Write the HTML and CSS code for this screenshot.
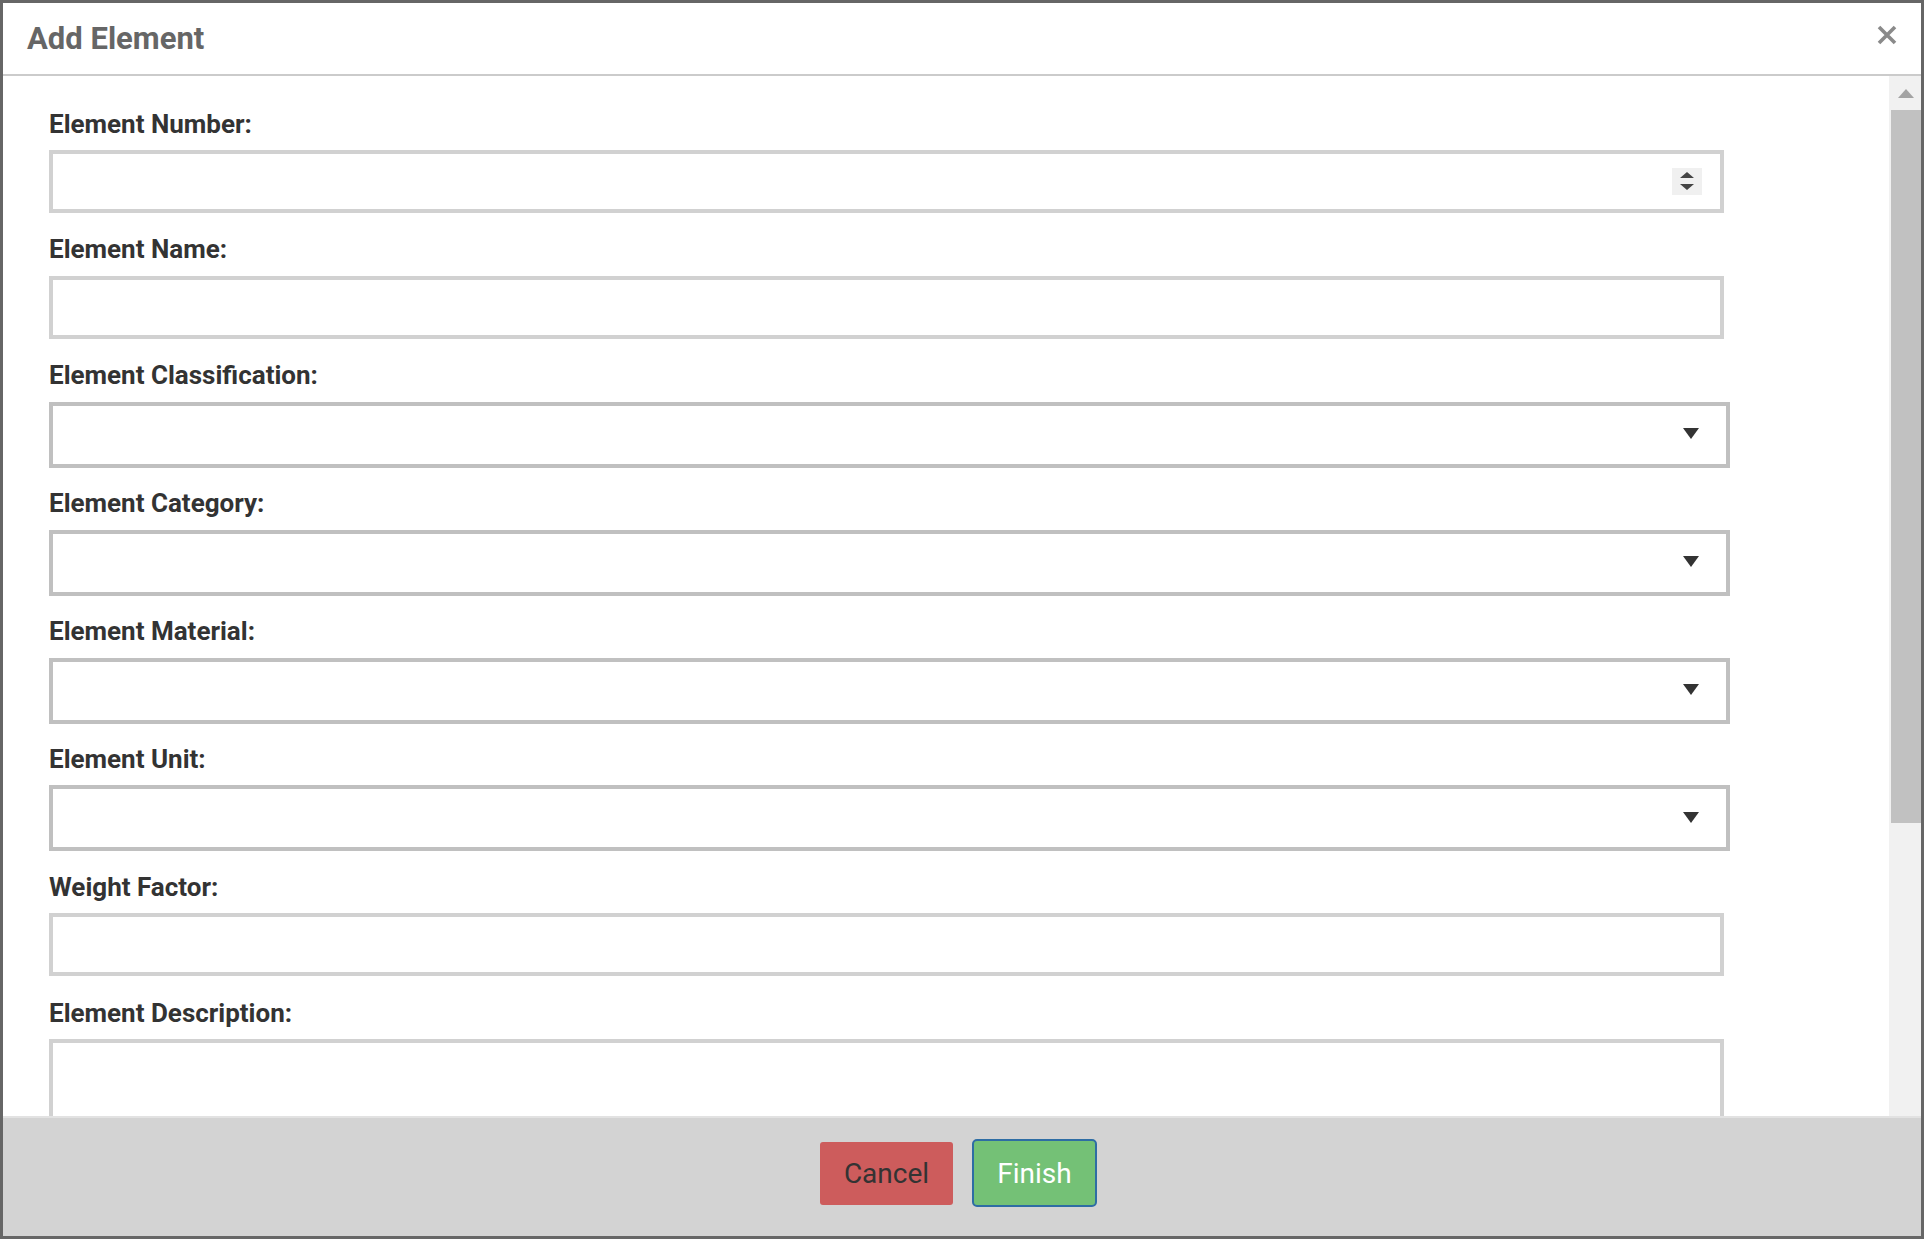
FILE: index.html
```html
<!DOCTYPE html>
<html lang="en">
<head>
<meta charset="utf-8">
<title>Add Element</title>
<link rel="stylesheet" href="styles.css">
</head>
<body>
<div class="modal">
  <div class="modal-header">
    <h4 class="modal-title">Add Element</h4>
    <button class="close" type="button" aria-label="Close">
      <svg width="20" height="20" viewBox="0 0 20 20"><path d="M2 2 L18 18 M18 2 L2 18" stroke="#8a8a8a" stroke-width="3.6" stroke-linecap="butt"/></svg>
    </button>
  </div>
  <div class="modal-body">
    <div class="form-area">
      <div class="form-group">
        <label class="label">Element Number:</label>
        <div class="field field-number">
          <div class="spinner">
            <svg width="30" height="27" viewBox="0 0 30 27"><path d="M8 10 L15 4 L22 10 Z M8 16 L22 16 L15 22 Z" fill="#444"/></svg>
          </div>
        </div>
      </div>
      <div class="form-group">
        <label class="label">Element Name:</label>
        <input class="field" type="text">
      </div>
      <div class="form-group sel">
        <label class="label">Element Classification:</label>
        <div class="select"><svg class="caret" width="16" height="11" viewBox="0 0 16 11"><path d="M0 0 L16 0 L8 11 Z" fill="#333"/></svg></div>
      </div>
      <div class="form-group sel">
        <label class="label">Element Category:</label>
        <div class="select"><svg class="caret" width="16" height="11" viewBox="0 0 16 11"><path d="M0 0 L16 0 L8 11 Z" fill="#333"/></svg></div>
      </div>
      <div class="form-group sel">
        <label class="label">Element Material:</label>
        <div class="select"><svg class="caret" width="16" height="11" viewBox="0 0 16 11"><path d="M0 0 L16 0 L8 11 Z" fill="#333"/></svg></div>
      </div>
      <div class="form-group sel">
        <label class="label">Element Unit:</label>
        <div class="select"><svg class="caret" width="16" height="11" viewBox="0 0 16 11"><path d="M0 0 L16 0 L8 11 Z" fill="#333"/></svg></div>
      </div>
      <div class="form-group">
        <label class="label">Weight Factor:</label>
        <input class="field" type="text">
      </div>
      <div class="form-group">
        <label class="label">Element Description:</label>
        <textarea class="field textarea"></textarea>
      </div>
    </div>
    <div class="scrollbar">
      <div class="sb-up"><svg width="16" height="9" viewBox="0 0 16 9"><path d="M0 9 L8 0 L16 9 Z" fill="#a3a3a3"/></svg></div>
      <div class="sb-thumb"></div>
    </div>
  </div>
  <div class="modal-footer">
    <button class="btn btn-cancel" type="button">Cancel</button>
    <button class="btn btn-finish" type="button">Finish</button>
  </div>
</div>
</body>
</html>
```
FILE: styles.css
```css
html, body {
  margin: 0;
  padding: 0;
  background: #ffffff;
}
body {
  font-family: Roboto, "Liberation Sans", Arial, sans-serif;
}
.modal {
  width: 1924px;
  height: 1239px;
  box-sizing: border-box;
  border: 3px solid #666666;
  display: flex;
  flex-direction: column;
  background: #ffffff;
  overflow: hidden;
}
.modal-header {
  height: 73px;
  box-sizing: border-box;
  border-bottom: 2px solid #cbcbcb;
  display: flex;
  align-items: center;
  justify-content: space-between;
  padding: 0 24px 0 24px;
  flex: none;
}
.modal-title {
  margin: 0;
  font-size: 31px;
  line-height: 37px;
  font-weight: 700;
  color: #666666;
}
.close {
  border: 0;
  background: transparent;
  padding: 0;
  margin: 0;
  width: 20px;
  height: 20px;
  display: block;
  align-self: flex-start;
  margin-top: 22px;
}
.close svg { display: block; }
.modal-body {
  flex: 1;
  display: flex;
  overflow: hidden;
  min-height: 0;
}
.form-area {
  flex: 1;
  padding: 33.5px 0 0 46px;
  overflow: hidden;
}
.form-group {
  margin-bottom: 22.5px;
}
.form-group.sel {
  margin-bottom: 21.5px;
}
.label {
  display: block;
  font-size: 26px;
  line-height: 29.4px;
  font-weight: 700;
  color: #333333;
  margin-bottom: 11px;
}
.field {
  display: block;
  width: 1675px;
  height: 63px;
  box-sizing: border-box;
  border: 4px solid #d1d1d1;
  background: #ffffff;
  margin: 0;
  padding: 0;
  outline: none;
  font-family: inherit;
  border-radius: 0;
}
.field-number {
  display: flex;
  align-items: center;
  justify-content: flex-end;
  padding-right: 18px;
}
.spinner {
  width: 30px;
  height: 27px;
  background: #f0f0f0;
}
.spinner svg { display: block; }
.textarea {
  height: 120px;
  resize: none;
}
.select {
  width: 1681px;
  height: 66px;
  box-sizing: border-box;
  border: 4px solid #c0c0c0;
  background: #ffffff;
  display: flex;
  align-items: center;
  justify-content: flex-end;
  padding-right: 27px;
}
.caret {
  display: block;
  position: relative;
  top: -1px;
}
.scrollbar {
  width: 32px;
  flex: none;
  background: #f1f1f1;
  display: flex;
  flex-direction: column;
}
.sb-up {
  height: 34px;
  display: flex;
  align-items: flex-start;
  justify-content: center;
  padding-top: 13px;
  box-sizing: border-box;
  padding-left: 2px;
}
.sb-up svg { display: block; }
.sb-thumb {
  margin-left: 2px;
  width: 30px;
  height: 713px;
  background: #c1c1c1;
}
.modal-footer {
  height: 120px;
  box-sizing: border-box;
  flex: none;
  background: #d3d3d3;
  border-top: 2px solid #e2e2e2;
  display: flex;
  align-items: center;
  justify-content: center;
  gap: 19px;
  padding: 0 7px 8px 0;
}
.btn {
  font-family: Roboto, "Liberation Sans", Arial, sans-serif;
  font-size: 28px;
  font-weight: 400;
  box-sizing: border-box;
  margin: 0;
  padding: 0;
  cursor: pointer;
}
.btn-cancel {
  width: 133px;
  height: 63px;
  background: #cd5c5c;
  color: #333333;
  border: 0;
  border-radius: 3px;
}
.btn-finish {
  width: 125px;
  height: 68px;
  background: #74c176;
  color: #ffffff;
  border: 2px solid #2e6da4;
  border-radius: 5px;
}
```
